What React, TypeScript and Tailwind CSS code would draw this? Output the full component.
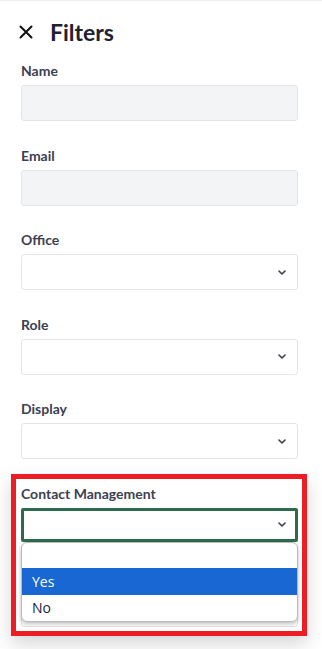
import React from "react"

function Chevron() {
  return (
    <svg width="8" height="5" viewBox="0 0 8 5" fill="none" className="text-[#3a3f4a]">
      <path d="M1 1l3 3 3-3" stroke="currentColor" strokeWidth="1.6" strokeLinecap="round" strokeLinejoin="round" />
    </svg>
  )
}

function TextField({ label }: { label: string }) {
  return (
    <div className="flex flex-col">
      <label className="text-sm font-bold leading-5 text-[#3b4151] mb-1">{label}</label>
      <div className="h-9 rounded-[3px] border border-[#e3e5e8] bg-[#f3f4f6]" />
    </div>
  )
}

function SelectField({ label }: { label: string }) {
  return (
    <div className="flex flex-col">
      <label className="text-sm font-bold leading-5 text-[#3b4151] mb-1">{label}</label>
      <div className="h-9 rounded-[3px] border border-[#e3e5e8] bg-white flex items-center justify-end pr-[11px]">
        <Chevron />
      </div>
    </div>
  )
}

export default function App() {
  return (
    <div className="relative w-[322px] h-[649px] overflow-hidden bg-white border-t border-[#eeeeee] font-['Lato',sans-serif]">
      {/* Header */}
      <div className="flex items-center h-[60px] pl-[19px] pt-[2px]">
        <svg width="14" height="14" viewBox="0 0 14 14" fill="none" className="text-[#111]">
          <path d="M1.5 1.5l11 11M12.5 1.5l-11 11" stroke="currentColor" strokeWidth="2" strokeLinecap="round" />
        </svg>
        <h1 className="ml-[17px] text-[23px] font-bold leading-8 text-[#1d2232]">Filters</h1>
      </div>

      {/* Fields */}
      <div className="flex flex-col gap-[24.6px] pl-[21px] pr-[24px]">
        <TextField label="Name" />
        <TextField label="Email" />
        <SelectField label="Office" />
        <SelectField label="Role" />
        <SelectField label="Display" />

        <div className="relative flex flex-col z-10">
          <label className="text-sm font-bold leading-5 text-[#3b4151] mb-1">Contact Management</label>
          <div className="h-[34px] rounded-[2px] border-[3px] border-[#2e6b4e] bg-white flex items-center justify-end pr-[9px]">
            <Chevron />
          </div>
          <ul className="absolute left-0 right-0 top-full mt-0 rounded-[6px] border border-[#b9b9b9] bg-white overflow-hidden shadow-[0_2px_4px_rgba(0,0,0,0.25)] font-['Open_Sans',sans-serif] text-[14px]">
            <li className="h-[25px]" />
            <li className="h-[27px] flex items-center pl-[10px] bg-[#1967d2] text-white">Yes</li>
            <li className="h-[26px] flex items-center pl-[10px] text-[#1c1f3d]">No</li>
          </ul>
        </div>

        {/* next field, hidden under the open list */}
        <div className="flex flex-col">
          <div className="h-5 mb-1" />
          <div className="h-9 rounded-[3px] border border-[#e3e5e8] bg-white" />
        </div>
      </div>

      {/* Highlight box */}
      <div className="pointer-events-none absolute left-[11px] top-[473px] w-[296px] h-[162px] border-[5px] border-[#ee1c25] z-20 shadow-[0_8px_18px_rgba(0,0,0,0.16)]" />
    </div>
  )
}
